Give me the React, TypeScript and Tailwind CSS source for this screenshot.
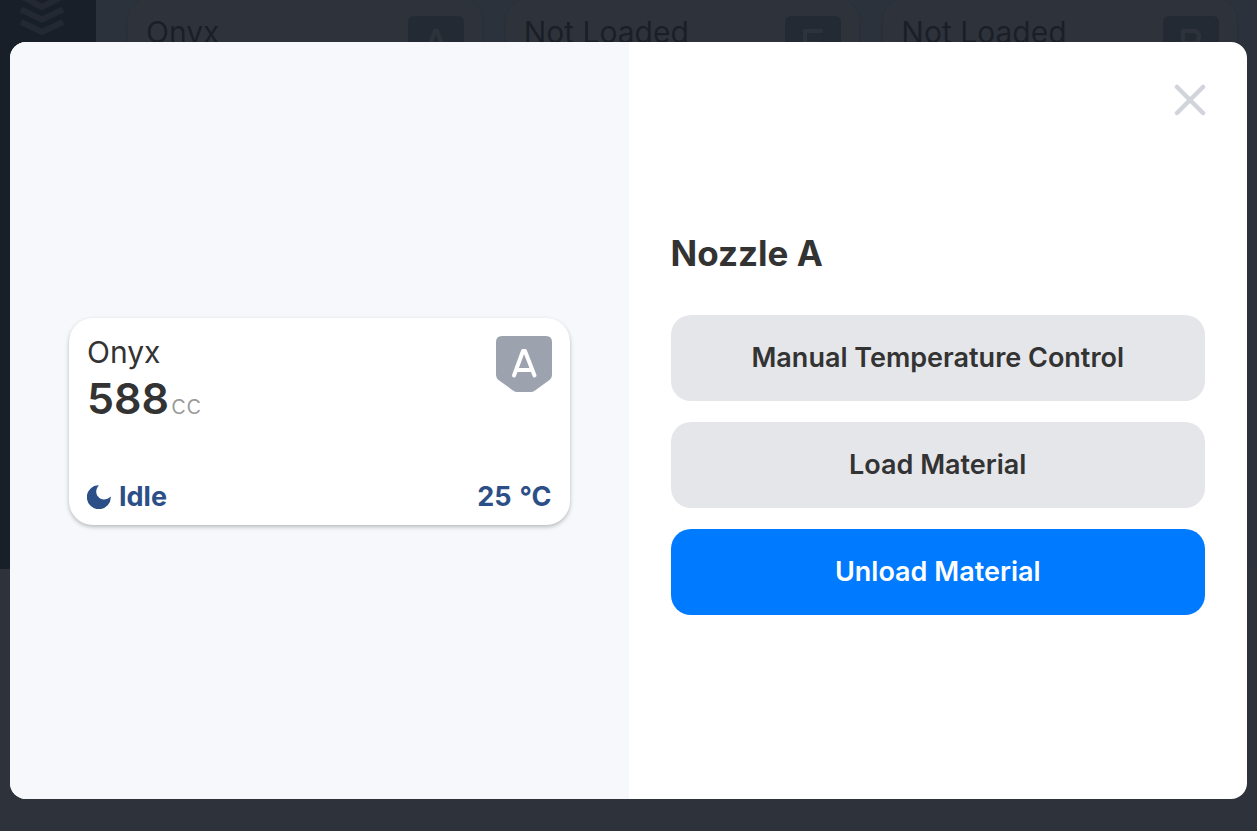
import React from 'react';

interface NozzleBadgeProps {
  letter: string;
}

const letterPaths: Record<string, string> = {
  A: 'M18 39.500L27 15H29L38.500 39.500M21 34H35',
  F: 'M20 40V15H36M20 27.500H33',
  P: 'M20 40V15H30Q36 15 36 21Q36 27 30 27H20',
};

const NozzleBadge: React.FC<NozzleBadgeProps> = ({ letter }) => (
  <svg viewBox="0 0 56 56" className="h-14 w-14 shrink-0" role="img" aria-label={`Nozzle ${letter}`}>
    <path
      d="M6 0H50Q56 0 56 6V39Q56 42 53.500 44L39 54.500Q37 56 34.500 56H21.500Q19 56 17 54.500L2.500 44Q0 42 0 39V6Q0 0 6 0Z"
      fill="#9ca3af"
    />
    <path
      d={letterPaths[letter]}
      fill="none"
      stroke="#fff"
      strokeWidth="4"
      strokeLinecap="round"
      strokeLinejoin="round"
    />
  </svg>
);

interface MaterialCardProps {
  name: string;
  letter: string;
  volume?: number;
  temperature?: number;
}

const MaterialCard: React.FC<MaterialCardProps> = ({ name, letter, volume, temperature }) => (
  <div className="flex h-[207px] flex-1 flex-col justify-between rounded-3xl bg-white p-[18px] pb-3 text-[#333333] shadow-[0_2px_4px_rgba(0,0,0,0.25)]">
    <div className="flex items-start justify-between">
      <div>
        <div className="text-[30px] leading-8">{name}</div>
        {volume !== undefined && (
          <div className="flex items-baseline gap-[2px] leading-[60px]">
            <span className="text-[43px] font-semibold">{volume}</span>
            <span className="text-[27px] font-light text-[#999999]">cc</span>
          </div>
        )}
      </div>
      <NozzleBadge letter={letter} />
    </div>
    {temperature !== undefined && (
      <div className="flex items-center justify-between text-[27px] leading-8 font-bold text-[#2c4f87]">
        <div className="flex items-center gap-2">
          <svg viewBox="0 0 24 24" className="h-6 w-6" aria-hidden="true">
            <path
              d="M12 0.200C8.500 4 8.500 8.500 11 11.500C14 15.500 19.500 15.500 23.800 11.500A12 12 0 1 1 12 0.200Z"
              fill="currentColor"
            />
          </svg>
          Idle
        </div>
        <div className="flex gap-2">
          <span>{temperature}</span>
          <span>°C</span>
        </div>
      </div>
    )}
  </div>
);

const actions = [
  { label: 'Manual Temperature Control', primary: false },
  { label: 'Load Material', primary: false },
  { label: 'Unload Material', primary: true },
];

export default function App() {
  return (
    <div className="relative h-screen overflow-hidden bg-white font-['Inter',sans-serif]">
      {/* Printer dashboard */}
      <div className="flex h-[569px] bg-[#e6f0fa]" aria-hidden="true">
        <aside className="flex w-24 shrink-0 justify-center bg-[#203446]">
          <svg viewBox="0 0 50 42" className="mr-3 h-[42px] w-[50px]">
            <path
              d="M4 -4L25 7L46 -4M4 9.500L25 19.500L46 9.500M4 22L25 32L46 22"
              fill="none"
              stroke="#8b929e"
              strokeWidth="6"
              strokeLinejoin="round"
            />
          </svg>
        </aside>
        <main className="-mt-0.5 flex flex-1 gap-6 pr-5 pl-8">
          <MaterialCard name="Onyx" letter="A" />
          <MaterialCard name="Not Loaded" letter="F" />
          <MaterialCard name="Not Loaded" letter="P" />
        </main>
      </div>

      {/* Nozzle dialog */}
      <div className="absolute inset-0 flex bg-[#171d26]/90 px-2.5 pt-[42px] pb-8">
        <div
          role="dialog"
          aria-labelledby="nozzle-title"
          className="relative grid flex-1 grid-cols-2 overflow-hidden rounded-2xl bg-white"
        >
          <section className="flex items-center bg-[#f6f8fc] px-[59px] pt-0.5">
            <MaterialCard name="Onyx" letter="A" volume={588} temperature={25} />
          </section>
          <section className="flex flex-col justify-center px-[42px]">
            <h1 id="nozzle-title" className="mb-9 text-[35px] leading-[52px] font-bold text-[#333333]">
              Nozzle A
            </h1>
            <div className="flex flex-col gap-[21px]">
              {actions.map((action) => (
                <button
                  key={action.label}
                  type="button"
                  className={`h-[86px] cursor-pointer rounded-[20px] pt-0.5 text-[27px] font-semibold ${
                    action.primary ? 'bg-[#007aff] text-white' : 'bg-[#e5e6ea] text-[#333333]'
                  }`}
                >
                  {action.label}
                </button>
              ))}
            </div>
          </section>
          <button
            type="button"
            aria-label="Close"
            className="absolute top-[42px] right-[41px] cursor-pointer text-[#d1d5db]"
          >
            <svg viewBox="0 0 32 32" className="h-8 w-8" aria-hidden="true">
              <path d="M3 3L29 29M29 3L3 29" fill="none" stroke="currentColor" strokeWidth="4.500" strokeLinecap="round" />
            </svg>
          </button>
        </div>
      </div>
    </div>
  );
}
